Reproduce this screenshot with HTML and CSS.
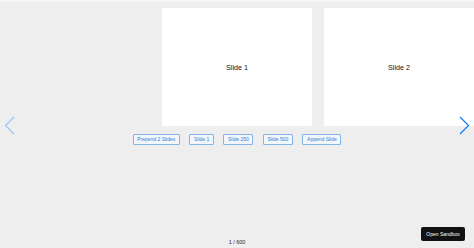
FILE: index.html
```html
<!DOCTYPE html>
<html>
<head>
<meta charset="utf-8">
<link rel="stylesheet" href="styles.css">
</head>
<body>
<div class="swiper">
  <div class="wrapper">
    <div class="slide">Slide 1</div>
    <div class="slide">Slide 2</div>
  </div>
  <div class="controls">
    <button class="btn">Prepend 2 Slides</button>
    <button class="btn">Slide 1</button>
    <button class="btn">Slide 250</button>
    <button class="btn">Slide 500</button>
    <button class="btn">Append Slide</button>
  </div>
  <div class="nav nav-prev">
    <svg width="11" height="19" viewBox="0 0 11 19"><path d="M10 1 L1.5 9.5 L10 18" fill="none" stroke="currentColor" stroke-width="1.2"/></svg>
  </div>
  <div class="nav nav-next">
    <svg width="11" height="19" viewBox="0 0 11 19"><path d="M1 1 L9.5 9.5 L1 18" fill="none" stroke="currentColor" stroke-width="1.2"/></svg>
  </div>
  <div class="pagination">1 / 600</div>
</div>
<a class="sandbox">Open Sandbox</a>
</body>
</html>
```
FILE: styles.css
```css
* { box-sizing: border-box; }
html, body { margin: 0; padding: 0; }
body {
  background: #eeeeee;
  font-family: "Liberation Sans", Arial, sans-serif;
  width: 474px;
  height: 248px;
  overflow: hidden;
  border-top: 2px solid #f5f5f5;
}
.swiper {
  position: relative;
  height: 246px;
  overflow: hidden;
}
.wrapper {
  display: flex;
  gap: 12px;
  padding-top: 6px;
  padding-left: 162px;
}
.slide {
  flex: 0 0 150px;
  height: 118px;
  background: #fff;
  display: flex;
  align-items: center;
  justify-content: center;
  font-size: 7.2px;
  color: #111;
}
.controls {
  display: flex;
  justify-content: center;
  gap: 9.5px;
  margin-top: 8px;
}
.btn {
  font-family: "Liberation Sans", Arial, sans-serif;
  font-size: 5px;
  line-height: 8px;
  height: 10.5px;
  padding: 0 3.6px;
  border: 1px solid #86b3e6;
  background: #f2f6fb;
  color: #2f7fd8;
  border-radius: 1px;
  margin: 0;
}
.nav {
  position: absolute;
  top: 114px;
  width: 11px;
  height: 19px;
  color: #007aff;
}
.nav svg { display: block; }
.nav-prev { left: 4px; opacity: 0.35; }
.nav-next { right: 4px; }
.pagination {
  position: absolute;
  left: 0;
  right: 0;
  bottom: 3px;
  text-align: center;
  font-size: 5.4px;
  color: #222;
}
.sandbox {
  position: absolute;
  left: 421px;
  top: 227px;
  width: 44px;
  height: 13.5px;
  background: #111;
  color: #fff;
  font-size: 5px;
  border-radius: 2px;
  display: flex;
  align-items: center;
  justify-content: center;
}
```
